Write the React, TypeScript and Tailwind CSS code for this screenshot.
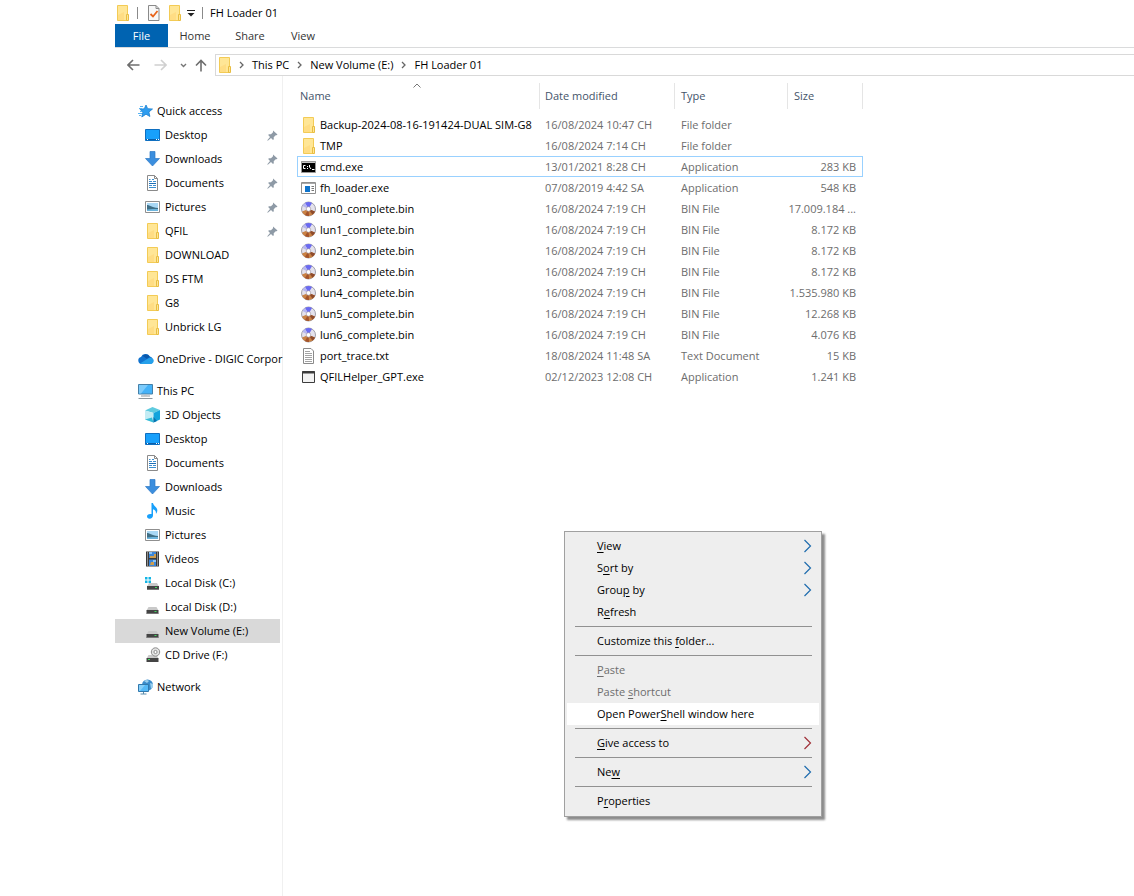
import type { ReactNode } from "react"
import clsx from "clsx"

function FolderIcon() {
  return (
    <svg width="16" height="16" viewBox="0 0 16 16" aria-hidden="true">
      <path d="M2.5.5h10v15h-10z" fill="#ffe696" stroke="#f3cb55" />
      <path d="M3 15V10l6-3v8z" fill="#ffdd84" />
      <path d="M11.5 9.5h2v6h-2z" fill="#ffe696" stroke="#e8bd42" />
    </svg>
  )
}

function StarIcon() {
  return (
    <svg width="16" height="16" viewBox="0 0 16 16" aria-hidden="true">
      <path d="M8 2l1.700 3.700 4.800.3-3.600 3 1 4.500L8 11.200 3.800 14l1-4.800L2 6.200l4.300-.4z" fill="#2e9df0" stroke="#1b7fd0" strokeWidth=".8" />
      <path d="M2 3.500h3M1 5.500h3M2 8.500h2M0 10.500h4M1 12.500h2" stroke="#57b3f3" />
    </svg>
  )
}

function DesktopIcon() {
  return (
    <svg width="16" height="16" viewBox="0 0 16 16" aria-hidden="true">
      <path d="M.5 2.5h14v11H.5z" fill="#18a0fb" stroke="#0f6fc0" />
      <path d="M1 12.5h13" stroke="#0b5ea8" />
      <path d="M2 12.5h1M11 12.5h1M13 12.5h1" stroke="#fff" />
    </svg>
  )
}

function DownloadIcon() {
  return (
    <svg width="16" height="16" viewBox="0 0 16 16" aria-hidden="true">
      <path d="M5 .5h5v7h4.5L7.5 15 .5 7.5H5z" fill="#3b8ede" stroke="#2d78c6" strokeWidth=".7" />
    </svg>
  )
}

function DocumentIcon() {
  return (
    <svg width="16" height="16" viewBox="0 0 16 16" aria-hidden="true">
      <path d="M2.500.5H9.500l3 3v12h-10z" fill="#fff" stroke="#8a8a8a" />
      <path d="M9.500.500V3.500h3" fill="none" stroke="#8a8a8a" />
      <path d="M4 4.500h1.500M7 4.500h2M4 6.500h3M8 6.500h3M4 10.500h3M8 10.500h3M4 12.500h7" stroke="#3c8fd0" />
      <path d="M4 8.500h7" stroke="#1f6fb5" />
    </svg>
  )
}

function PictureIcon() {
  return (
    <svg width="16" height="16" viewBox="0 0 16 16" aria-hidden="true">
      <path d="M.5 2.500h14v11H.5z" fill="#fff" stroke="#8f8f8f" />
      <path d="M2 4h11v8H2z" fill="#a9d8f5" />
      <path d="M2 6c3 0 4 2.500 11 3v3H2z" fill="#3f6f86" />
      <path d="M2 10.500c4-1 7-.5 11-.5v2H2z" fill="#6db5dd" />
    </svg>
  )
}

function OneDriveIcon() {
  return (
    <svg width="16" height="16" viewBox="0 0 16 16" aria-hidden="true">
      <path d="M3.500 13a3.500 3.500 0 0 1-.5-6.900A5 5 0 0 1 11.800 5.400 4 4 0 0 1 12.500 13z" fill="#1173cf" />
      <path d="M4.500 4.800A5 5 0 0 1 11.800 5.500L9 8z" fill="#0a58ab" />
      <path d="M2 12.600l8-5a4 4 0 0 1 5.500 1c.8 2-.6 4.400-3 4.400h-9z" fill="#26a0ea" />
    </svg>
  )
}

function PcIcon() {
  return (
    <svg width="16" height="16" viewBox="0 0 16 16" aria-hidden="true">
      <path d="M.5 1.500h14v9.500H.5z" fill="#44b2f8" stroke="#4580a8" />
      <path d="M1 2h9L3 10.500H1z" fill="#7ccbfb" />
      <path d="M3 13h9M.5 15.500h14" stroke="#8c979e" />
      <path d="M6 12h3" stroke="#b5bdc2" />
    </svg>
  )
}

function CubeIcon() {
  return (
    <svg width="16" height="16" viewBox="0 0 16 16" aria-hidden="true">
      <path d="M7.500 0L15 3 8.500 6 0 3.500z" fill="#5fcbdf" />
      <path d="M0 3.500L8.500 6v9.500L0 12.500z" fill="#c3ecf4" />
      <path d="M8.500 6L15 3v9.500l-6.500 3z" fill="#12a4dc" />
      <path d="M0 12.500l7-2 1.500 5z" fill="#35bcd8" />
      <path d="M8.500 10L12 14l-3.500 1.500z" fill="#0873ae" />
    </svg>
  )
}

function MusicIcon() {
  return (
    <svg width="16" height="16" viewBox="0 0 16 16" aria-hidden="true">
      <path d="M6.500 0H8c.3 3 4.500 4 4.300 7.500 0 1.500-.7 2.700-1.400 3.500.4-3-1-4.300-2.900-4.800v6.300c0 2-1.500 3.200-3.300 3.200S2 14.800 2 13.300 3.500 10.600 6.500 11z" fill="#18a0fb" />
    </svg>
  )
}

function VideoIcon() {
  return (
    <svg width="16" height="16" viewBox="0 0 16 16" aria-hidden="true">
      <path d="M1 .5h13v15H1z" fill="#3a3a3a" />
      <path d="M2.500 1.500v14M12.500 1.500v14" stroke="#e5e5e5" strokeDasharray="1 1" />
      <path d="M4 1h7v6H4zM4 8.500h7v6.500H4z" fill="#3b86d8" />
      <path d="M5 5h4V3h2v4H5zM6 11h3v3H5z" fill="#cf9d4d" />
      <path d="M4 1h3v2H4zM8 9h3v2H8z" fill="#8cc4f5" />
    </svg>
  )
}

function DriveIcon() {
  return (
    <svg width="16" height="16" viewBox="0 0 16 16" aria-hidden="true">
      <path d="M3.500 8h8l2 3.500h-12z" fill="#c9c9c9" />
      <path d="M1.500 11h12v4h-12z" fill="#444" />
      <path d="M2 14.500h11" stroke="#777" />
      <path d="M9.500 12.500h2" stroke="#42d860" />
    </svg>
  )
}

function SystemDriveIcon() {
  return (
    <svg width="16" height="16" viewBox="0 0 16 16" aria-hidden="true">
      <path d="M0 2h2.500v2.500H0zM3.500 2H6v2.500H3.500zM0 5.500h2.500V8H0zM3.500 5.500H6V8H3.500z" fill="#12b5e5" />
      <path d="M4 8h8l2 3.500H2z" fill="#c9c9c9" />
      <path d="M2 11h12v4H2z" fill="#444" />
      <path d="M2 14.500h12" stroke="#777" />
      <path d="M10 12.500h2" stroke="#42d860" />
    </svg>
  )
}

function CdDriveIcon() {
  return (
    <svg width="16" height="16" viewBox="0 0 16 16" aria-hidden="true">
      <path d="M3.500 8h8l2 3.500h-12z" fill="#c9c9c9" />
      <path d="M1.500 11h12v4h-12z" fill="#444" />
      <path d="M3 12.500h2" stroke="#42d860" />
      <circle cx="10.500" cy="5" r="4.200" fill="#e3e3e3" stroke="#8d8d8d" />
      <circle cx="10.500" cy="5" r="1.600" fill="#fff" stroke="#8d8d8d" />
    </svg>
  )
}

function NetworkIcon() {
  return (
    <svg width="16" height="16" viewBox="0 0 16 16" aria-hidden="true">
      <circle cx="9.500" cy="6" r="5.500" fill="#3a8ccb" />
      <path d="M6 2c2-1.500 4-1 5 0L9 4zM12 4l3 1v3l-2 2z" fill="#9bd0ef" />
      <path d="M.5 5.500h10v7H.5z" fill="#55b9f6" stroke="#3078ad" />
      <path d="M1 6h6l-5 6H1z" fill="#86cffa" />
      <path d="M5.500 13v2M2.500 15h6" stroke="#5a8cab" />
    </svg>
  )
}

function CmdIcon() {
  return (
    <svg width="16" height="16" viewBox="0 0 16 16" aria-hidden="true">
      <path d="M.5 2.500h14v11H.5z" fill="#000" stroke="#9a9a9a" />
      <path d="M1 3.500h13" stroke="#c7c7c7" />
      <path d="M4.500 6.500h-2v3h2M6.500 7v1M6.500 9v1M8.500 6v2l1.500 2M11 10.500h2.500" stroke="#fff" fill="none" />
    </svg>
  )
}

function LoaderIcon() {
  return (
    <svg width="16" height="16" viewBox="0 0 16 16" aria-hidden="true">
      <path d="M.5 2.500h14v11H.5z" fill="#fff" stroke="#8f8f8f" />
      <path d="M1 3.500h13" stroke="#a8a8a8" />
      <path d="M4 6h5v6H4z" fill="#0f74cc" />
      <path d="M10.500 6.500H13M10.500 8.500H13M10.500 10.500H13" stroke="#777" />
    </svg>
  )
}

function DiscIcon() {
  return (
    <svg width="16" height="16" viewBox="0 0 16 16" aria-hidden="true">
      <circle cx="7.500" cy="8" r="7" fill="#e4e2ec" stroke="#8b8b98" strokeWidth=".8" />
      <path d="M7.500 8L4 1.900a7 7 0 0 1 7 0z" fill="#6a6af2" />
      <path d="M7.500 8L1.500 5A7 7 0 0 1 4 1.900z" fill="#b6b6ee" />
      <path d="M7.500 8L1 10.500a7 7 0 0 0 13 0z" fill="#c98244" />
      <path d="M7.500 8l-3.500 6a7 7 0 0 0 4 1z" fill="#a4532a" />
      <path d="M7.500 8l6.500 2.500a7 7 0 0 1-2.500 3.300z" fill="#8e4b2c" />
      <circle cx="7.500" cy="8" r="2.300" fill="#fff" stroke="#9a8f98" strokeWidth=".6" />
    </svg>
  )
}

function TextFileIcon() {
  return (
    <svg width="16" height="16" viewBox="0 0 16 16" aria-hidden="true">
      <path d="M2.500.5H10l2.500 2.500v12.500h-10z" fill="#fff" stroke="#8a8a8a" />
      <path d="M4 3.500h5M4 5.500h7M4 7.500h7M4 9.500h7M4 11.500h7M4 13.500h7" stroke="#a3a3a3" />
    </svg>
  )
}

function WindowIcon() {
  return (
    <svg width="16" height="16" viewBox="0 0 16 16" aria-hidden="true">
      <path d="M1.500 2.500h12v11h-12z" fill="#f3f3f3" stroke="#3c3c3c" />
      <path d="M1 3.500h13" stroke="#3c3c3c" strokeWidth="2" />
    </svg>
  )
}

function PinIcon() {
  return (
    <svg width="11" height="11" viewBox="0 0 11 11" className="ml-auto mr-0.5 shrink-0" aria-hidden="true">
      <path d="M6 .5l4.500 4-1 .8-.8-.1-2 2 .1 2-.8.700L4 8 .8 10.700.3 10.200 3 7 1.200 5l.7-.8 2.100.1 2-2z" fill="#8e9aa6" />
    </svg>
  )
}

function CrumbArrow() {
  return (
    <svg width="5" height="8" viewBox="0 0 5 8" aria-hidden="true">
      <path d="M1 1l3 3-3 3" fill="none" stroke="#666" strokeWidth="1.300" />
    </svg>
  )
}

type TreeItem = { label: string; icon: ReactNode; pinned?: boolean; selected?: boolean }
type TreeGroup = { root: TreeItem; children: TreeItem[] }

const tree: TreeGroup[] = [
  {
    root: { label: "Quick access", icon: <StarIcon /> },
    children: [
      { label: "Desktop", icon: <DesktopIcon />, pinned: true },
      { label: "Downloads", icon: <DownloadIcon />, pinned: true },
      { label: "Documents", icon: <DocumentIcon />, pinned: true },
      { label: "Pictures", icon: <PictureIcon />, pinned: true },
      { label: "QFIL", icon: <FolderIcon />, pinned: true },
      { label: "DOWNLOAD", icon: <FolderIcon /> },
      { label: "DS FTM", icon: <FolderIcon /> },
      { label: "G8", icon: <FolderIcon /> },
      { label: "Unbrick LG", icon: <FolderIcon /> },
    ],
  },
  { root: { label: "OneDrive - DIGIC Corpor", icon: <OneDriveIcon /> }, children: [] },
  {
    root: { label: "This PC", icon: <PcIcon /> },
    children: [
      { label: "3D Objects", icon: <CubeIcon /> },
      { label: "Desktop", icon: <DesktopIcon /> },
      { label: "Documents", icon: <DocumentIcon /> },
      { label: "Downloads", icon: <DownloadIcon /> },
      { label: "Music", icon: <MusicIcon /> },
      { label: "Pictures", icon: <PictureIcon /> },
      { label: "Videos", icon: <VideoIcon /> },
      { label: "Local Disk (C:)", icon: <SystemDriveIcon /> },
      { label: "Local Disk (D:)", icon: <DriveIcon /> },
      { label: "New Volume (E:)", icon: <DriveIcon />, selected: true },
      { label: "CD Drive (F:)", icon: <CdDriveIcon /> },
    ],
  },
  { root: { label: "Network", icon: <NetworkIcon /> }, children: [] },
]

const files = [
  { name: "Backup-2024-08-16-191424-DUAL SIM-G8", date: "16/08/2024 10:47 CH", type: "File folder", size: "", icon: <FolderIcon /> },
  { name: "TMP", date: "16/08/2024 7:14 CH", type: "File folder", size: "", icon: <FolderIcon /> },
  { name: "cmd.exe", date: "13/01/2021 8:28 CH", type: "Application", size: "283 KB", icon: <CmdIcon />, focused: true },
  { name: "fh_loader.exe", date: "07/08/2019 4:42 SA", type: "Application", size: "548 KB", icon: <LoaderIcon /> },
  { name: "lun0_complete.bin", date: "16/08/2024 7:19 CH", type: "BIN File", size: "17.009.184 ...", icon: <DiscIcon /> },
  { name: "lun1_complete.bin", date: "16/08/2024 7:19 CH", type: "BIN File", size: "8.172 KB", icon: <DiscIcon /> },
  { name: "lun2_complete.bin", date: "16/08/2024 7:19 CH", type: "BIN File", size: "8.172 KB", icon: <DiscIcon /> },
  { name: "lun3_complete.bin", date: "16/08/2024 7:19 CH", type: "BIN File", size: "8.172 KB", icon: <DiscIcon /> },
  { name: "lun4_complete.bin", date: "16/08/2024 7:19 CH", type: "BIN File", size: "1.535.980 KB", icon: <DiscIcon /> },
  { name: "lun5_complete.bin", date: "16/08/2024 7:19 CH", type: "BIN File", size: "12.268 KB", icon: <DiscIcon /> },
  { name: "lun6_complete.bin", date: "16/08/2024 7:19 CH", type: "BIN File", size: "4.076 KB", icon: <DiscIcon /> },
  { name: "port_trace.txt", date: "18/08/2024 11:48 SA", type: "Text Document", size: "15 KB", icon: <TextFileIcon /> },
  { name: "QFILHelper_GPT.exe", date: "02/12/2023 12:08 CH", type: "Application", size: "1.241 KB", icon: <WindowIcon /> },
]

type MenuEntry = { label: string; key: number; submenu?: boolean; disabled?: boolean; active?: boolean; red?: boolean }

// key is the index of the underlined letter
const menu: MenuEntry[][] = [
  [
    { label: "View", key: 0, submenu: true },
    { label: "Sort by", key: 1, submenu: true },
    { label: "Group by", key: 4, submenu: true },
    { label: "Refresh", key: 1 },
  ],
  [{ label: "Customize this folder...", key: 15 }],
  [
    { label: "Paste", key: 0, disabled: true },
    { label: "Paste shortcut", key: 6, disabled: true },
    { label: "Open PowerShell window here", key: 10, active: true },
  ],
  [{ label: "Give access to", key: 0, submenu: true, red: true }],
  [{ label: "New", key: 2, submenu: true }],
  [{ label: "Properties", key: 1 }],
]

function TreeRow({ item, root }: { item: TreeItem; root?: boolean }) {
  return (
    <button
      type="button"
      className={clsx(
        "flex h-6 w-full items-center text-left",
        root ? "gap-[3px] pl-[23px]" : "gap-1 pl-[30px]",
        item.selected && "bg-[#d9d9d9]"
      )}
    >
      <span className="shrink-0">{item.icon}</span>
      <span className="whitespace-nowrap">{item.label}</span>
      {item.pinned && <PinIcon />}
    </button>
  )
}

function ContextMenu() {
  return (
    <div
      role="menu"
      className="absolute left-[564px] top-[531px] w-[258px] border border-[#a0a0a0] bg-[#eeeeee] px-0.5 pb-1 pt-[3px] shadow-[3px_3px_2px_rgba(0,0,0,0.45)]"
    >
      {menu.map((group, i) => (
        <div key={i}>
          {i > 0 && <div role="separator" className="ml-2 mr-[7px] my-[3px] h-px bg-[#919191]" />}
          {group.map((entry) => (
            <button
              key={entry.label}
              type="button"
              role="menuitem"
              disabled={entry.disabled}
              className={clsx(
                "flex h-[22px] w-full items-center justify-between pl-[30px] pr-[7px]",
                entry.disabled && "text-[#6d6d6d]",
                entry.active && "bg-white"
              )}
            >
              <span>
                {entry.label.slice(0, entry.key)}
                <span className="underline underline-offset-2">{entry.label[entry.key]}</span>
                {entry.label.slice(entry.key + 1)}
              </span>
              {entry.submenu && (
                <svg width="9" height="14" viewBox="0 0 9 14" aria-hidden="true">
                  <path d="M1.500 1l6 6-6 6" fill="none" stroke={entry.red ? "#a03038" : "#1f6cae"} strokeWidth="1.200" />
                </svg>
              )}
            </button>
          ))}
        </div>
      ))}
    </div>
  )
}

export default function App() {
  return (
    <div className="relative flex min-h-screen flex-col bg-white pl-[115px] font-['Open_Sans','Noto_Sans',sans-serif] text-[11px] leading-4 text-black">
      <header>
        <div className="flex h-6 items-center pt-0.5">
          <FolderIcon />
          <span className="ml-1.5 h-3 w-px bg-[#8a8a8a]" />
          <button type="button" aria-label="Properties" className="ml-2">
            <svg width="16" height="16" viewBox="0 0 16 16" aria-hidden="true">
              <path d="M2.500.5H10l3 3v12H2.500z" fill="#f8f8f8" stroke="#8a8a8a" />
              <path d="M10 .5v3h3" fill="none" stroke="#8a8a8a" />
              <path d="M4.500 9l2.500 2.500L11.500 6" fill="none" stroke="#e8641b" strokeWidth="1.800" />
            </svg>
          </button>
          <button type="button" aria-label="New folder" className="ml-[5px]">
            <FolderIcon />
          </button>
          <button type="button" aria-label="Customize Quick Access Toolbar" className="ml-1">
            <svg width="8" height="8" viewBox="0 0 8 8" aria-hidden="true">
              <path d="M0 1.500h8" stroke="#222" />
              <path d="M.5 4h7L4 7.500z" fill="#222" />
            </svg>
          </button>
          <span className="ml-[7px] h-3 w-px bg-[#8a8a8a]" />
          <h1 className="ml-[7px]">FH Loader 01</h1>
        </div>

        <nav className="flex h-6 border-b border-[#dadbdc] text-[#333]">
          <button type="button" className="w-[53px] bg-[#0063b1] text-white">File</button>
          <button type="button" className="w-[54px]">Home</button>
          <button type="button" className="w-14">Share</button>
          <button type="button" className="w-[50px]">View</button>
        </nav>

        <div className="flex items-center pt-1.5">
          <button type="button" aria-label="Back" className="ml-3">
            <svg width="13" height="12" viewBox="0 0 13 12" aria-hidden="true">
              <path d="M12.500 6H1.500M6 1L1 6l5 5" fill="none" stroke="#6e6e6e" strokeWidth="1.600" />
            </svg>
          </button>
          <button type="button" aria-label="Forward" className="ml-3.5">
            <svg width="13" height="12" viewBox="0 0 13 12" aria-hidden="true">
              <path d="M.5 6h11M7 1l5 5-5 5" fill="none" stroke="#d0d0d0" strokeWidth="1.600" />
            </svg>
          </button>
          <button type="button" aria-label="Recent locations" className="ml-[13px]">
            <svg width="7" height="5" viewBox="0 0 7 5" aria-hidden="true">
              <path d="M1 1l2.500 2.500L6 1" fill="none" stroke="#777" strokeWidth="1.400" />
            </svg>
          </button>
          <button type="button" aria-label="Up" className="ml-2">
            <svg width="12" height="13" viewBox="0 0 12 13" aria-hidden="true">
              <path d="M6 12.500V1.500M1 6.500l5-5 5 5" fill="none" stroke="#6e6e6e" strokeWidth="1.600" />
            </svg>
          </button>
          <div className="ml-2 flex h-[22px] flex-1 items-center border border-r-0 border-[#d9d9d9] pl-px">
            <FolderIcon />
            <div className="ml-1.5 flex items-center gap-2">
              <CrumbArrow />
              <button type="button">This PC</button>
              <CrumbArrow />
              <button type="button">New Volume (E:)</button>
              <CrumbArrow />
              <button type="button">FH Loader 01</button>
            </div>
          </div>
        </div>
      </header>

      <div className="flex flex-1">
        <aside className="w-[168px] shrink-0 border-r border-[#f0f0f0] pr-0.5 pt-[23px]">
          {tree.map((group) => (
            <div key={group.root.label} className="mb-2">
              <TreeRow item={group.root} root />
              {group.children.map((item) => (
                <TreeRow key={item.label} item={item} />
              ))}
            </div>
          ))}
        </aside>

        <main className="flex-1 pl-3.5 pt-[7px]">
          <table className="w-[566px] table-fixed border-separate border-spacing-0 text-left text-[#6d6d6d]">
            <thead>
              <tr className="h-[26px] text-[#44546a]">
                <th className="relative w-[243px] border-r border-[#e5e5e5] p-0 pl-[3px] font-normal">
                  Name
                  <svg width="8" height="5" viewBox="0 0 8 5" className="absolute left-[116px] top-0" aria-hidden="true">
                    <path d="M.5 4.500L4 1l3.500 3.500" fill="none" stroke="#777" />
                  </svg>
                </th>
                <th className="w-[135px] border-r border-[#e5e5e5] p-0 pl-[5px] font-normal">Date modified</th>
                <th className="w-[113px] border-r border-[#e5e5e5] p-0 pl-1.5 font-normal">Type</th>
                <th className="w-[75px] border-r border-[#e5e5e5] p-0 pl-1.5 font-normal">Size</th>
              </tr>
            </thead>
            <tbody className="before:block before:h-[5px]">
              {files.map((file) => (
                <tr key={file.name} className={clsx("h-[21px]", file.focused && "outline -outline-offset-1 outline-[#99d1ff]")}>
                  <td className="whitespace-nowrap p-0 pl-1 text-black">
                    <span className="flex items-center gap-[3px]">
                      {file.icon}
                      {file.name}
                    </span>
                  </td>
                  <td className="whitespace-nowrap p-0 pl-[5px]">{file.date}</td>
                  <td className="whitespace-nowrap p-0 pl-1.5">{file.type}</td>
                  <td className="whitespace-nowrap p-0 pr-[7px] text-right">{file.size}</td>
                </tr>
              ))}
            </tbody>
          </table>
        </main>
      </div>

      <ContextMenu />
    </div>
  )
}
